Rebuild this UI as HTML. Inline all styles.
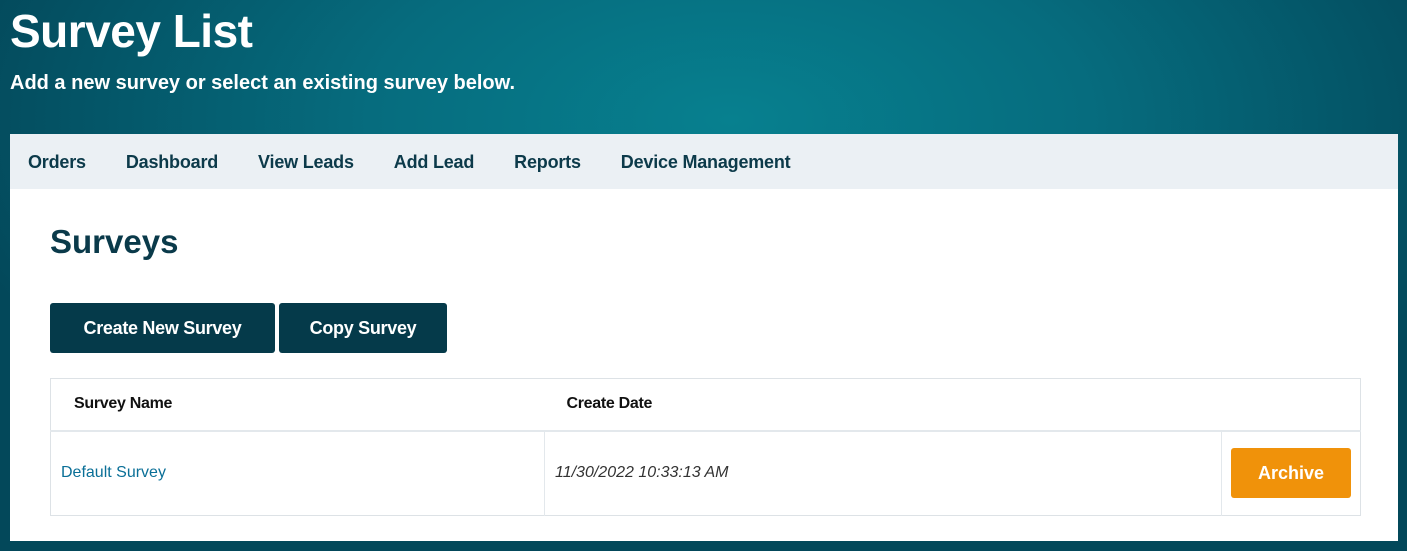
<!DOCTYPE html>
<html><head><style>
*{margin:0;padding:0;box-sizing:border-box}
body{width:1407px;height:551px;overflow:hidden;font-family:"Liberation Sans",sans-serif;
background:radial-gradient(ellipse 800px 420px at 730px 120px,#07808f 0%,#066c7e 45%,#03485a 100%);position:relative}
h1{position:absolute;left:10px;top:4px;color:#fff;font-size:46px;font-weight:bold;letter-spacing:-0.5px}
.sub{position:absolute;left:10px;top:72px;color:#fff;font-size:20px;font-weight:bold;letter-spacing:0}
.panel{position:absolute;left:10px;top:134px;width:1388px;height:407px;background:#fff}
.nav{height:55px;background:#ebf0f4;display:flex;align-items:center;padding-left:18px;padding-top:2px}
.nav span{color:#0c3a4a;font-size:18px;font-weight:bold;margin-right:40px;letter-spacing:-0.2px}
h2{position:absolute;left:40px;top:89px;color:#0a3a4a;font-size:33px;font-weight:bold}
.btn{position:absolute;top:169px;height:50px;background:#053a4a;color:#fff;font-size:18px;font-weight:bold;border-radius:3px;display:flex;align-items:center;justify-content:center;letter-spacing:-0.3px}
table{position:absolute;left:40px;top:244px;width:1311px;border-collapse:collapse;border:1px solid #dde2e6}
th{height:52px;text-align:left;font-size:16px;color:#111;border-bottom:2px solid #e3e8ec;letter-spacing:-0.3px}
td{height:85px;font-size:16px;border-right:1px solid #e3e8ec}
.arch{width:120px;height:50px;background:#f0920a;color:#fff;font-weight:bold;font-size:18px;border-radius:3px;display:flex;align-items:center;justify-content:center;margin-left:9px}
</style></head><body>
<h1>Survey List</h1>
<div class="sub">Add a new survey or select an existing survey below.</div>
<div class="panel">
<div class="nav"><span>Orders</span><span>Dashboard</span><span>View Leads</span><span>Add Lead</span><span>Reports</span><span>Device Management</span></div>
<h2>Surveys</h2>
<div class="btn" style="left:40px;width:225px">Create New Survey</div>
<div class="btn" style="left:269px;width:168px">Copy Survey</div>
<table>
<tr><th style="width:494px;padding-left:23px">Survey Name</th><th style="width:677px;padding-left:22px">Create Date</th><th></th></tr>
<tr><td style="padding-left:10px;color:#0a6f97">Default Survey</td><td style="padding-left:10px;font-style:italic;color:#333">11/30/2022 10:33:13 AM</td><td style="border-right:none"><div class="arch">Archive</div></td></tr>
</table>
</div>
</body></html>
